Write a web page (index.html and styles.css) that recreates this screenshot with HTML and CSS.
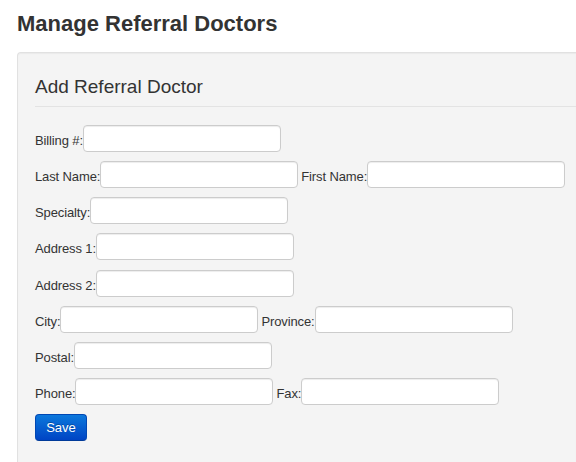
FILE: index.html
```html
<!DOCTYPE html>
<html>
<head>
<meta charset="utf-8">
<link rel="stylesheet" href="styles.css">
</head>
<body>
<div class="page">
  <h1 class="title">Manage Referral Doctors</h1>
  <div class="well">
    <div class="legend">Add Referral Doctor</div>
    <form class="form">
      <div class="row"><label class="lbl">Billing #:</label><input class="inp" type="text"></div>
      <div class="row"><label class="lbl">Last Name:</label><input class="inp" type="text"><label class="lbl next">First Name:</label><input class="inp" type="text"></div>
      <div class="row"><label class="lbl">Specialty:</label><input class="inp" type="text"></div>
      <div class="row"><label class="lbl">Address 1:</label><input class="inp" type="text"></div>
      <div class="row"><label class="lbl">Address 2:</label><input class="inp" type="text"></div>
      <div class="row"><label class="lbl">City:</label><input class="inp" type="text"><label class="lbl next">Province:</label><input class="inp" type="text"></div>
      <div class="row"><label class="lbl">Postal:</label><input class="inp" type="text"></div>
      <div class="row"><label class="lbl">Phone:</label><input class="inp" type="text"><label class="lbl next">Fax:</label><input class="inp" type="text"></div>
      <button class="btn" type="button">Save</button>
    </form>
  </div>
</div>
</body>
</html>
```

FILE: styles.css
```css
html, body {
  margin: 0;
  padding: 0;
  overflow: hidden;
  background: #fff;
}
body {
  font-family: "Liberation Sans", Arial, sans-serif;
  color: #333;
}
.page {
  padding-left: 17px;
  height: 462px;
  overflow: hidden;
}
.title {
  margin: 11px 0 15px;
  font-size: 22px;
  line-height: 26px;
  font-weight: bold;
  color: #333;
}
.well {
  background: #f4f4f4;
  border: 1px solid #e1e1e1;
  border-right: 0;
  border-radius: 4px 0 0 4px;
  box-shadow: inset 0 1px 1px rgba(0,0,0,0.04);
  padding: 23px 0 40px 17px;
}
.legend {
  font-size: 19px;
  line-height: 22px;
  padding-bottom: 8px;
  border-bottom: 1px solid #e3e3e3;
  margin-bottom: 18px;
}
.row {
  display: flex;
  align-items: flex-start;
  height: 27px;
  margin-bottom: 9.14px;
}
.lbl {
  font-size: 13px;
  letter-spacing: -0.12px;
  line-height: 16px;
  padding-top: 8px;
  white-space: nowrap;
}
.lbl.next {
  margin-left: 3px;
}
.inp {
  box-sizing: border-box;
  width: 198px;
  height: 27px;
  margin: 0;
  padding: 3px 6px;
  border: 1px solid #cccccc;
  border-radius: 4px;
  background: #fff;
  box-shadow: inset 0 1px 1px rgba(0,0,0,0.075);
  font-family: "Liberation Sans", Arial, sans-serif;
  font-size: 13px;
  flex: none;
}
.btn {
  display: block;
  box-sizing: border-box;
  width: 52px;
  height: 27px;
  margin-top: 4px;
  padding: 0;
  border: 1px solid #0047b3;
  border-bottom-color: #003a99;
  border-radius: 4px;
  background: linear-gradient(to bottom, #0b78dc, #0044c4);
  color: #fff;
  font-family: "Liberation Sans", Arial, sans-serif;
  font-size: 13px;
  text-shadow: 0 -1px 0 rgba(0,0,0,0.25);
}
```
